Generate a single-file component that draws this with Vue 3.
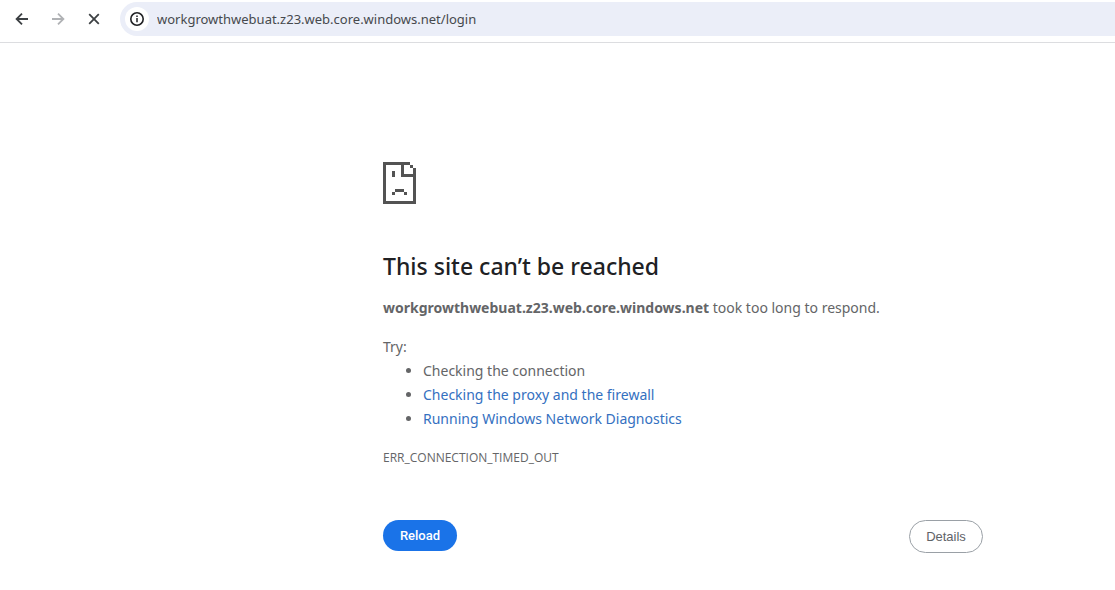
<script setup>
const host = 'workgrowthwebuat.z23.web.core.windows.net'
const suggestions = [
  { text: 'Checking the connection', link: false },
  { text: 'Checking the proxy and the firewall', link: true },
  { text: 'Running Windows Network Diagnostics', link: true },
]
</script>

<template>
  <div class="browser">
    <header class="toolbar">
      <nav class="nav">
        <button class="nav-btn" type="button" aria-label="Back">
          <svg viewBox="0 0 16 16" width="16" height="16">
            <path d="M14 8H3M8 2.6 2.6 8 8 13.4" />
          </svg>
        </button>
        <button class="nav-btn faded" type="button" aria-label="Forward">
          <svg viewBox="0 0 16 16" width="16" height="16">
            <path d="M2 8h11M8 2.6 13.4 8 8 13.4" />
          </svg>
        </button>
        <button class="nav-btn" type="button" aria-label="Stop loading">
          <svg viewBox="0 0 16 16" width="16" height="16">
            <path d="M3.2 3.2l9.6 9.6M12.8 3.2l-9.6 9.6" />
          </svg>
        </button>
      </nav>
      <div class="address">
        <button class="site-info" type="button" aria-label="View site information">
          <svg viewBox="0 0 16 16" width="16" height="16">
            <circle cx="8" cy="8" r="6.2" fill="none" stroke="#202124" stroke-width="1.6" />
            <path d="M8 7v4.2M8 4.6v1.5" fill="none" stroke="#202124" stroke-width="1.5" />
          </svg>
        </button>
        <input class="url" type="text" aria-label="Address" :value="host + '/login'" />
      </div>
    </header>

    <main class="page">
      <svg class="sad" viewBox="0 0 11 14" width="33" height="42" shape-rendering="crispEdges" aria-hidden="true">
        <path
          fill="#535353"
          d="M0 0h9v1h1v1h1v12H0zM1 1v12h9V5H6V1zM7 1v3h3V2H9V1zM3 3h1v2H3zM4 9h3v1H4zM3 10h1v1H3zM7 10h1v1H7z"
          fill-rule="evenodd"
        />
      </svg>
      <h1>This site can’t be reached</h1>
      <p class="summary"><strong>{{ host }}</strong> took too long to respond.</p>
      <p class="try">Try:</p>
      <ul>
        <li v-for="item in suggestions" :key="item.text">
          <a v-if="item.link" href="#">{{ item.text }}</a>
          <template v-else>{{ item.text }}</template>
        </li>
      </ul>
      <p class="code">ERR_CONNECTION_TIMED_OUT</p>
      <div class="actions">
        <button class="reload" type="button">Reload</button>
        <button class="details" type="button">Details</button>
      </div>
    </main>
  </div>
</template>

<style>
body {
  margin: 0;
  background: #fff;
}
</style>

<style scoped>
.browser {
  font-family: "Segoe UI", "Noto Sans", "Open Sans", sans-serif;
  color: #646567;
}
button {
  font: inherit;
  border: 0;
  padding: 0;
  cursor: pointer;
}
.toolbar {
  display: flex;
  align-items: center;
  padding: 2px 0 6px 10px;
  border-bottom: 1px solid #dcdde0;
}
.nav {
  display: flex;
  gap: 12px;
  margin-right: 14px;
}
.nav-btn {
  display: flex;
  align-items: center;
  justify-content: center;
  width: 24px;
  height: 24px;
  background: none;
  color: #3c4043;
}
.nav-btn path {
  fill: none;
  stroke: currentColor;
  stroke-width: 1.8;
}
.nav-btn.faded {
  color: #b0b2b5;
}
.address {
  flex: 1;
  display: flex;
  align-items: center;
  gap: 8px;
  height: 34px;
  padding-left: 5px;
  border-radius: 17px 0 0 17px;
  background: #ebeef8;
}
.site-info {
  display: flex;
  align-items: center;
  justify-content: center;
  width: 24px;
  height: 24px;
  border-radius: 50%;
  background: #fff;
}
.url {
  flex: 1;
  min-width: 0;
  padding: 0;
  border: 0;
  outline: 0;
  background: none;
  font: inherit;
  font-size: 13px;
  color: #46494d;
}
.page {
  max-width: 600px;
  margin-left: 383px;
  padding-top: 119px;
  font-size: 14px;
  line-height: 24px;
}
.sad {
  display: block;
}
h1 {
  margin: 47px 0 15px;
  font-size: 23px;
  font-weight: 500;
  line-height: 30px;
  color: #202124;
}
p {
  margin: 0;
}
.summary {
  margin-bottom: 15px;
}
ul {
  margin: 0;
  padding-left: 40px;
}
a {
  color: #3470bf;
  text-decoration: none;
}
.code {
  margin-top: 15px;
  font-family: "Open Sans", "Noto Sans", sans-serif;
  font-size: 12px;
}
.actions {
  display: flex;
  justify-content: space-between;
  align-items: flex-start;
  margin-top: 50px;
}
.actions button {
  font-family: Roboto, sans-serif;
  font-size: 13px;
  border-radius: 17px;
}
.actions .reload {
  width: 74px;
  height: 31px;
  background: #1a73e8;
  color: #fff;
  font-weight: 500;
}
.actions .details {
  width: 74px;
  height: 33px;
  border: 1px solid #9aa0a6;
  background: #fff;
  color: #5f6368;
  font-family: "Liberation Sans", Arial, sans-serif;
}
</style>
